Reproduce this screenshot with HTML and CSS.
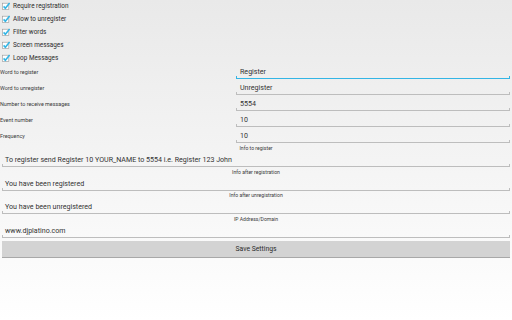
FILE: index.html
```html
<!DOCTYPE html>
<html>
<head>
<meta charset="utf-8">
<link rel="stylesheet" href="styles.css">
</head>
<body>
<div class="page">
  <div class="checks">
    <div class="check"><span class="box"><svg viewBox="0 0 10 10" width="8" height="8"><rect x="0.5" y="1.5" width="8" height="8" fill="#fff" stroke="#9a9a9a" stroke-width="0.8"/><path d="M2 5.5 L4.2 7.8 L9.6 1.2" fill="none" stroke="#33b5e5" stroke-width="2"/></svg></span><span>Require registration</span></div>
    <div class="check"><span class="box"><svg viewBox="0 0 10 10" width="8" height="8"><rect x="0.5" y="1.5" width="8" height="8" fill="#fff" stroke="#9a9a9a" stroke-width="0.8"/><path d="M2 5.5 L4.2 7.8 L9.6 1.2" fill="none" stroke="#33b5e5" stroke-width="2"/></svg></span><span>Allow to unregister</span></div>
    <div class="check"><span class="box"><svg viewBox="0 0 10 10" width="8" height="8"><rect x="0.5" y="1.5" width="8" height="8" fill="#fff" stroke="#9a9a9a" stroke-width="0.8"/><path d="M2 5.5 L4.2 7.8 L9.6 1.2" fill="none" stroke="#33b5e5" stroke-width="2"/></svg></span><span>Filter words</span></div>
    <div class="check"><span class="box"><svg viewBox="0 0 10 10" width="8" height="8"><rect x="0.5" y="1.5" width="8" height="8" fill="#fff" stroke="#9a9a9a" stroke-width="0.8"/><path d="M2 5.5 L4.2 7.8 L9.6 1.2" fill="none" stroke="#33b5e5" stroke-width="2"/></svg></span><span>Screen messages</span></div>
    <div class="check"><span class="box"><svg viewBox="0 0 10 10" width="8" height="8"><rect x="0.5" y="1.5" width="8" height="8" fill="#fff" stroke="#9a9a9a" stroke-width="0.8"/><path d="M2 5.5 L4.2 7.8 L9.6 1.2" fill="none" stroke="#33b5e5" stroke-width="2"/></svg></span><span>Loop Messages</span></div>
  </div>

  <div class="rows">
    <div class="row"><div class="lbl">Word to register</div><div class="field focused">Register</div></div>
    <div class="row"><div class="lbl">Word to unregister</div><div class="field">Unregister</div></div>
    <div class="row"><div class="lbl">Number to receive messages</div><div class="field">5554</div></div>
    <div class="row"><div class="lbl">Event number</div><div class="field">10</div></div>
    <div class="row"><div class="lbl">Frequency</div><div class="field">10</div></div>
  </div>

  <div class="infos">
    <div class="info"><div class="cap">Info to register</div><div class="field wide">To register send Register 10 YOUR_NAME to 5554 i.e. Register 123 John</div></div>
    <div class="info"><div class="cap">Info after registration</div><div class="field wide">You have been registered</div></div>
    <div class="info"><div class="cap">Info after unregistration</div><div class="field wide">You have been unregistered</div></div>
    <div class="info"><div class="cap">IP Address/Domain</div><div class="field wide">www.djplatino.com</div></div>
  </div>

  <div class="btn">Save Settings</div>
</div>
</body>
</html>
```

FILE: styles.css
```css
html, body {
  margin: 0;
  padding: 0;
  height: 100%;
}
body {
  width: 512px;
  height: 320px;
  overflow: hidden;
  background: linear-gradient(to bottom, #e9e9e9 0%, #f4f4f4 50%, #ffffff 100%);
  font-family: Roboto, "Liberation Sans", sans-serif;
  color: #333;
}
.page {
  display: flex;
  flex-direction: column;
}
.checks {
  display: flex;
  flex-direction: column;
}
.check {
  height: 12.8px;
  display: flex;
  align-items: center;
  gap: 3px;
  padding-left: 2px;
  font-size: 6.4px;
  color: #2b2b2b;
}
.box {
  display: flex;
  width: 8px;
  height: 8px;
}
.rows {
  display: flex;
  flex-direction: column;
}
.row {
  display: flex;
  height: 16px;
}
.lbl {
  width: 236px;
  font-size: 5.4px;
  color: #3a3a3a;
  display: flex;
  align-items: center;
}
.field {
  position: relative;
  flex: 1;
  margin-right: 2px;
  height: 15px;
  box-sizing: border-box;
  border-bottom: 1px solid #bdbdbd;
  font-size: 7.1px;
  color: #333;
  padding-left: 4px;
  padding-top: 1px;
  display: flex;
  align-items: center;
}
.field::before, .field::after {
  content: "";
  position: absolute;
  bottom: -1px;
  width: 1px;
  height: 3px;
  background: #bdbdbd;
}
.field::before { left: 0; }
.field::after { right: 0; }
.field.focused {
  border-bottom: 1px solid #33b5e5;
}
.field.focused::before, .field.focused::after {
  background: #33b5e5;
}
.infos {
  display: flex;
  flex-direction: column;
}
.info {
  display: flex;
  flex-direction: column;
  height: 23.6px;
}
.cap {
  height: 8px;
  font-size: 5.1px;
  color: #3a3a3a;
  text-align: center;
  line-height: 8px;
}
.field.wide {
  flex: none;
  height: 15px;
  margin-left: 2px;
  margin-right: 2px;
  padding-left: 3px;
}
.btn {
  margin: 3px 2px 0 2px;
  height: 17px;
  box-sizing: border-box;
  background: #d3d3d3;
  border-bottom: 1px solid #a8a8a8;
  font-size: 6.8px;
  color: #2b2b2b;
  display: flex;
  align-items: center;
  justify-content: center;
}
```
